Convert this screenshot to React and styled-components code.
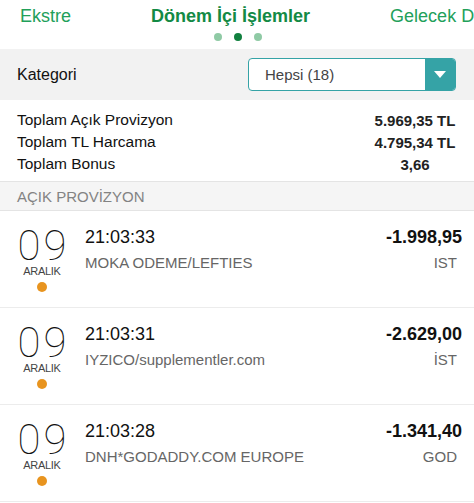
import React from "react";
import styled, { createGlobalStyle } from "styled-components";

const GlobalStyle = createGlobalStyle`
  html, body {
    margin: 0;
    padding: 0;
    background: #fff;
  }
  body {
    font-family: "Liberation Sans", Arial, sans-serif;
    width: 474px;
    height: 503px;
    overflow: hidden;
  }
`;

const tabs = ["Ekstre", "Dönem İçi İşlemler", "Gelecek Dönem"];

const totals = [
  { label: "Toplam Açık Provizyon", value: "5.969,35 TL" },
  { label: "Toplam TL Harcama", value: "4.795,34 TL" },
  { label: "Toplam Bonus", value: "3,66" },
];

const transactions = [
  { day: "09", month: "ARALIK", time: "21:03:33", merchant: "MOKA ODEME/LEFTIES", amount: "-1.998,95", city: "IST" },
  { day: "09", month: "ARALIK", time: "21:03:31", merchant: "IYZICO/supplementler.com", amount: "-2.629,00", city: "İST" },
  { day: "09", month: "ARALIK", time: "21:03:28", merchant: "DNH*GODADDY.COM EUROPE", amount: "-1.341,40", city: "GOD" },
];

const App = () => {
  return (
    <Page>
      <GlobalStyle />
      <Header>
        <Tabs>
          {tabs.map((t, i) => (
            <Tab key={t} $active={i === 1}>
              {t}
            </Tab>
          ))}
        </Tabs>
        <Dots>
          <Dot />
          <Dot $active />
          <Dot />
        </Dots>
      </Header>

      <FilterBar>
        <FilterLabel>Kategori</FilterLabel>
        <Select>
          <SelectValue>Hepsi (18)</SelectValue>
          <SelectButton>
            <svg width="12" height="7" viewBox="0 0 12 7">
              <path d="M0 0 L12 0 L6 7 Z" fill="#fff" />
            </svg>
          </SelectButton>
        </Select>
      </FilterBar>

      <Totals>
        {totals.map((row) => (
          <TotalRow key={row.label}>
            <span>{row.label}</span>
            <TotalValue>{row.value}</TotalValue>
          </TotalRow>
        ))}
      </Totals>

      <SectionHeader>AÇIK PROVİZYON</SectionHeader>

      <List>
        {transactions.map((tx) => (
          <Row key={tx.time}>
            <DateCol>
              <Day>{tx.day}</Day>
              <Month>{tx.month}</Month>
              <StatusDot />
            </DateCol>
            <Info>
              <Time>{tx.time}</Time>
              <Merchant>{tx.merchant}</Merchant>
            </Info>
            <AmountCol>
              <Amount>{tx.amount}</Amount>
              <City>{tx.city}</City>
            </AmountCol>
          </Row>
        ))}
      </List>
    </Page>
  );
};

const Page = styled.div`
  width: 474px;
  height: 503px;
  overflow: hidden;
  background: #fff;
`;

const Header = styled.div`
  height: 49px;
  background: #fff;
  overflow: hidden;
`;

const Tabs = styled.div`
  display: flex;
  gap: 80px;
  padding: 6px 0 0 20px;
  white-space: nowrap;
`;

const Tab = styled.div`
  font-size: 18px;
  line-height: 20px;
  color: ${(p) => (p.$active ? "#138a45" : "#22a05a")};
  font-weight: ${(p) => (p.$active ? 700 : 400)};
  flex-shrink: 0;
`;

const Dots = styled.div`
  display: flex;
  justify-content: center;
  gap: 12px;
  margin-top: 7px;
  padding-left: 1px;
`;

const Dot = styled.span`
  width: 8px;
  height: 8px;
  border-radius: 50%;
  background: ${(p) => (p.$active ? "#11803f" : "#8fcaa5")};
`;

const FilterBar = styled.div`
  height: 51px;
  background: #f2f2f2;
  display: flex;
  align-items: center;
  justify-content: space-between;
  padding: 0 18px 0 17px;
  box-sizing: border-box;
`;

const FilterLabel = styled.span`
  font-size: 16px;
  color: #111;
`;

const Select = styled.div`
  width: 208px;
  height: 33px;
  box-sizing: border-box;
  border: 1px solid #35a3a6;
  border-radius: 4px;
  background: #fff;
  display: flex;
  overflow: hidden;
`;

const SelectValue = styled.span`
  flex: 1;
  display: flex;
  align-items: center;
  padding-left: 16px;
  font-size: 15px;
  color: #444;
`;

const SelectButton = styled.span`
  width: 30px;
  background: #35a3a6;
  display: flex;
  align-items: center;
  justify-content: center;
`;

const Totals = styled.div`
  padding: 9px 0 6px 17px;
  height: 81px;
  box-sizing: border-box;
`;

const TotalRow = styled.div`
  display: flex;
  align-items: center;
  height: 22px;
  font-size: 15.5px;
  color: #111;
`;

const TotalValue = styled.span`
  margin-left: auto;
  width: 104px;
  margin-right: 7px;
  text-align: center;
  font-size: 15px;
  font-weight: 700;
  color: #222;
`;

const SectionHeader = styled.div`
  height: 30px;
  box-sizing: border-box;
  background: #f5f5f5;
  border-top: 1px solid #e4e4e4;
  border-bottom: 1px solid #e4e4e4;
  display: flex;
  align-items: center;
  padding-left: 17px;
  font-size: 15px;
  color: #838383;
`;

const List = styled.div``;

const Row = styled.div`
  height: 97px;
  box-sizing: border-box;
  border-bottom: 1px solid #ececec;
  display: flex;
  align-items: flex-start;
  padding: 0 12px 0 17px;
`;

const DateCol = styled.div`
  width: 50px;
  display: flex;
  flex-direction: column;
  align-items: center;
  padding-top: 16px;
`;

const Day = styled.div`
  font-family: Roboto, "Liberation Sans", sans-serif;
  font-weight: 100;
  font-size: 42px;
  line-height: 38px;
  height: 38px;
  color: #111;
  letter-spacing: 3px;
  margin-right: -3px;
`;

const Month = styled.div`
  font-size: 11px;
  line-height: 12px;
  color: #444;
  letter-spacing: -0.3px;
`;

const StatusDot = styled.span`
  width: 10px;
  height: 10px;
  border-radius: 50%;
  background: #e8941f;
  margin-top: 5px;
`;

const Info = styled.div`
  flex: 1;
  padding: 16px 0 0 18px;
  display: flex;
  flex-direction: column;
`;

const Time = styled.div`
  font-size: 18px;
  line-height: 20px;
  color: #111;
`;

const Merchant = styled.div`
  font-size: 15px;
  line-height: 18px;
  color: #666;
  margin-top: 7px;
`;

const AmountCol = styled.div`
  padding-top: 16px;
  display: flex;
  flex-direction: column;
  align-items: flex-end;
`;

const Amount = styled.div`
  font-size: 18px;
  line-height: 20px;
  font-weight: 700;
  color: #111;
`;

const City = styled.div`
  font-size: 15px;
  line-height: 18px;
  color: #666;
  margin-top: 7px;
  margin-right: 5px;
`;

export default App;
